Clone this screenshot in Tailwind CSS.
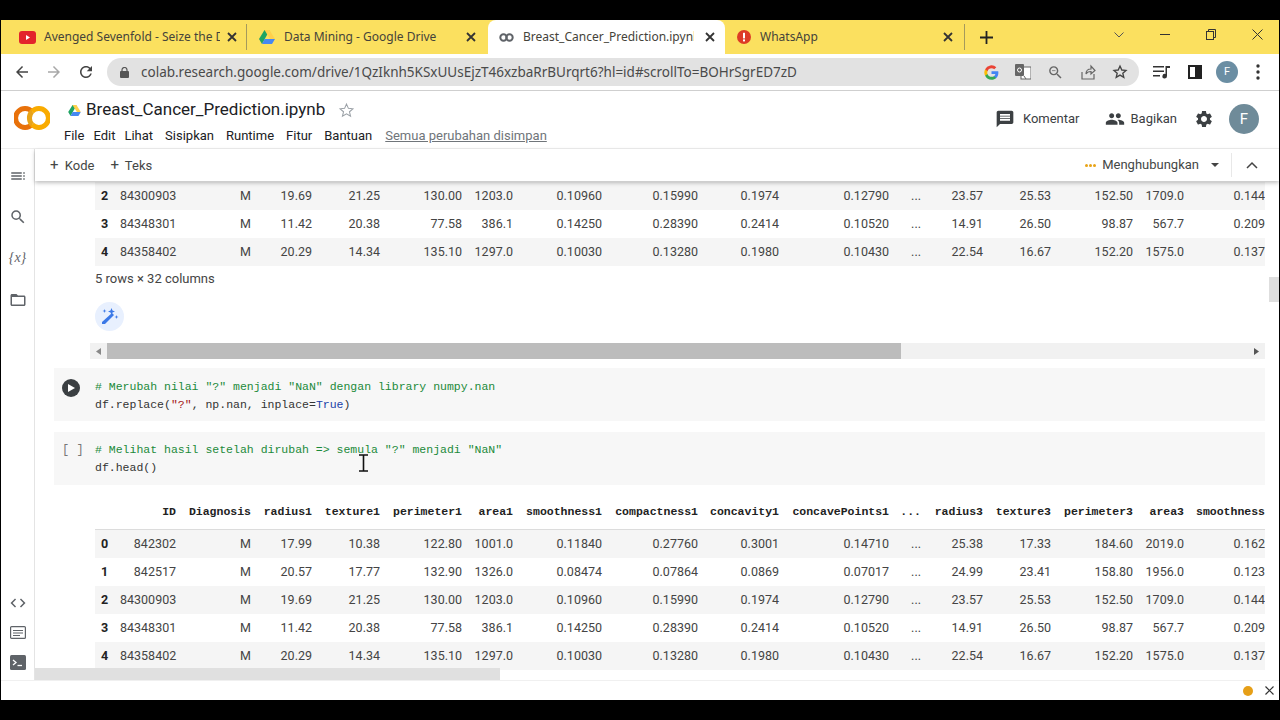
<!DOCTYPE html>
<html lang="id">

<head>
  <meta charset="UTF-8">
  <title>Breast_Cancer_Prediction.ipynb - Colaboratory</title>
  <script src="https://cdn.jsdelivr.net/npm/@tailwindcss/browser@4"></script>
</head>

<body class="bg-black h-[720px] overflow-hidden font-['Roboto',sans-serif] text-[#3c4043]">
  <div class="h-5"></div>
  <div class="relative mx-[1px] h-[680px] flex flex-col bg-white overflow-hidden">

    <!-- browser tabs -->
    <div class="h-[34px] shrink-0 bg-[#fbe05f] flex items-center font-['Noto_Sans',sans-serif] text-[12px] text-[#45433a]">
      <div class="w-[245px] flex items-center pl-[18px] pr-[9px]">
        <svg class="w-[17px] h-[13px] mr-[8px] shrink-0" viewBox="0 0 17 13"><rect width="17" height="13" rx="3" fill="#e3242b"/><path d="M7 4l4 2.5L7 9z" fill="#fff"/></svg>
        <span class="w-[176px] overflow-hidden whitespace-nowrap">Avenged Sevenfold - Seize the D</span>
        <svg class="w-[10px] h-[10px] ml-auto" viewBox="0 0 10 10"><path d="M1 1l8 8M9 1l-8 8" stroke="#333" stroke-width="1.8"/></svg>
      </div>
      <div class="w-[1px] h-[26px] bg-[#a59a5c]"></div>
      <div class="w-[241px] flex items-center pl-[12px] pr-[12px]">
        <svg class="w-[16px] h-[14px] mr-[9px] shrink-0" viewBox="0 0 16 14"><path d="M5.5 0h5L8 5 5.5 9.5 3 14 0 9z" fill="#1fa463"/><path d="M5.5 0h5L16 9h-5z" fill="#ffd04b"/><path d="M3 14l2.6-5H16l-3 5z" fill="#4688f1"/></svg>
        <span>Data Mining - Google Drive</span>
        <svg class="w-[10px] h-[10px] ml-auto" viewBox="0 0 10 10"><path d="M1 1l8 8M9 1l-8 8" stroke="#333" stroke-width="1.8"/></svg>
      </div>
      <div class="w-[237px] h-full bg-white rounded-t-[8px] flex items-center pl-[11px] pr-[10px]">
        <svg class="w-[15px] h-[9px] mr-[9px] shrink-0" viewBox="0 0 15 9" fill="none" stroke="#5f6368" stroke-width="2"><circle cx="4.5" cy="4.5" r="3.2"/><circle cx="10.5" cy="4.5" r="3.2"/></svg>
        <span class="w-[171px] overflow-hidden whitespace-nowrap">Breast_Cancer_Prediction.ipynb -</span>
        <svg class="w-[10px] h-[10px] ml-auto" viewBox="0 0 10 10"><path d="M1 1l8 8M9 1l-8 8" stroke="#333" stroke-width="1.8"/></svg>
      </div>
      <div class="w-[239px] flex items-center pl-[12px] pr-[11px]">
        <svg class="w-[14px] h-[14px] mr-[9px] shrink-0" viewBox="0 0 14 14"><circle cx="7" cy="7" r="7" fill="#dd3b26"/><rect x="6" y="2.8" width="2" height="5.6" fill="#fff"/><rect x="6" y="9.4" width="2" height="2" fill="#fff"/></svg>
        <span>WhatsApp</span>
        <svg class="w-[10px] h-[10px] ml-auto" viewBox="0 0 10 10"><path d="M1 1l8 8M9 1l-8 8" stroke="#333" stroke-width="1.8"/></svg>
      </div>
      <div class="w-[1px] h-[26px] bg-[#a59a5c]"></div>
      <svg class="w-[13px] h-[13px] ml-[15px]" viewBox="0 0 13 13"><path d="M6.5 0v13M0 6.5h13" stroke="#222" stroke-width="1.8"/></svg>
      <div class="ml-auto flex items-center -mt-[5px]">
        <svg class="w-[10px] h-[6px] mr-[36px]" viewBox="0 0 10 6" fill="none"><path d="M.5.5L5 5 9.500.5" stroke="#555"/></svg>
        <div class="w-[10px] h-[1px] bg-[#333] mr-[36px]"></div>
        <svg class="w-[10px] h-[11px] mr-[36px]" viewBox="0 0 10 11" fill="none" stroke="#333"><rect x=".5" y="2.500" width="7" height="8"/><path d="M2.500 2.500V.5h7v8H7.500"/></svg>
        <svg class="w-[11px] h-[11px] mr-[16px]" viewBox="0 0 11 11"><path d="M.5.5l10 10M10.500.5l-10 10" stroke="#333"/></svg>
      </div>
    </div>

    <!-- address bar -->
    <div class="h-[37px] shrink-0 bg-white border-b border-[#cfcfcf] flex items-center">
      <svg class="w-[18px] h-[18px] ml-[12px] fill-[#444]" viewBox="0 0 24 24"><path d="M20 11H7.830l5.590-5.590L12 4l-8 8 8 8 1.410-1.410L7.830 13H20v-2z"/></svg>
      <svg class="w-[18px] h-[18px] ml-[14px] fill-[#a8a8a8]" viewBox="0 0 24 24"><path d="M4 11h12.170l-5.590-5.590L12 4l8 8-8 8-1.410-1.410L16.170 13H4v-2z"/></svg>
      <svg class="w-[18px] h-[18px] ml-[14px] fill-[#444]" viewBox="0 0 24 24"><path d="M17.650 6.350C16.200 4.900 14.210 4 12 4c-4.420 0-7.990 3.580-7.990 8s3.570 8 7.990 8c3.730 0 6.840-2.550 7.730-6h-2.080c-.82 2.330-3.040 4-5.650 4-3.310 0-6-2.690-6-6s2.690-6 6-6c1.660 0 3.140.69 4.220 1.780L13 11h7V4l-2.350 2.350z"/></svg>
      <div class="ml-[12px] w-[1032px] h-[28px] rounded-full bg-[#e2e2e2] flex items-center pl-[13px] pr-[11px]">
        <svg class="w-[9px] h-[11px] mr-[12px]" viewBox="0 0 9 11"><rect y="4" width="9" height="7" rx="1" fill="#555"/><path d="M2 4.500V3a2.500 2.500 0 015 0v1.500" fill="none" stroke="#555" stroke-width="1.200"/></svg>
        <span class="font-['Noto_Sans',sans-serif] text-[13.5px] text-[#4a4a4a] whitespace-nowrap">colab.research.google.com/drive/1QzIknh5KSxUUsEjzT46xzbaRrBUrqrt6?hl=id#scrollTo=BOHrSgrED7zD</span>
        <div class="ml-auto flex items-center gap-[16px]">
          <svg class="w-[15px] h-[15px]" viewBox="0 0 24 24"><path d="M23 12.300c0-.8-.1-1.600-.2-2.300H12v4.300h6.200a5.300 5.300 0 01-2.300 3.500v2.900h3.700c2.200-2 3.400-5 3.400-8.400z" fill="#4285f4"/><path d="M12 23.500c3.100 0 5.700-1 7.600-2.800l-3.700-2.900c-1 .7-2.300 1.100-3.900 1.100-3 0-5.500-2-6.400-4.700H1.800v3A11.500 11.500 0 0012 23.500z" fill="#34a853"/><path d="M5.600 14.200a6.900 6.900 0 010-4.400v-3H1.800a11.500 11.500 0 000 10.400z" fill="#fbbc05"/><path d="M12 5.100c1.700 0 3.200.6 4.400 1.700l3.300-3.300A11.500 11.500 0 001.800 6.800l3.800 3C6.500 7.100 9 5.100 12 5.100z" fill="#ea4335"/></svg>
          <svg class="w-[16px] h-[16px]" viewBox="0 0 16 16"><rect x="6" y="3" width="10" height="12" fill="#fff" stroke="#666"/><rect width="9" height="12" rx="1" fill="#666"/><path d="M9 12l2 3" stroke="#666"/><circle cx="4.500" cy="6" r="2" fill="none" stroke="#fff"/></svg>
          <svg class="w-[17px] h-[17px] fill-[#666]" viewBox="0 0 24 24"><path d="M15.500 14h-.79l-.28-.27A6.470 6.470 0 0016 9.500 6.500 6.500 0 109.500 16c1.610 0 3.090-.59 4.230-1.570l.27.28v.79l5 4.990L20.490 19l-4.990-5zm-6 0C7.010 14 5 11.990 5 9.500S7.010 5 9.500 5 14 7.010 14 9.500 11.990 14 9.500 14z"/><path d="M7 9h5v1H7z"/></svg>
          <svg class="w-[16px] h-[16px]" viewBox="0 0 16 16" fill="none" stroke="#666" stroke-width="1.200"><path d="M2 8v7h12v-5M6 10c0-4 3-5 5-5V2l4 4.500L11 10V7.500C9 7.500 7 8 6 10z"/></svg>
          <svg class="w-[16px] h-[16px]" viewBox="0 0 24 24" fill="none" stroke="#444" stroke-width="2"><path d="M12 3l2.700 6 6.300.6-4.800 4.200 1.500 6.300L12 16.700 6.300 20l1.500-6.200L3 9.600 9.300 9z"/></svg>
        </div>
      </div>
      <svg class="w-[17px] h-[14px] ml-[14px]" viewBox="0 0 17 14" fill="#333"><path d="M0 1h11v1.500H0zM0 5.500h11V7H0zM0 10h7v1.500H0z"/><path d="M12.500 1H17v2h-3v8a2.300 2.300 0 11-1.500-2z"/></svg>
      <svg class="w-[14px] h-[14px] ml-[18px]" viewBox="0 0 14 14"><path fill-rule="evenodd" d="M0 0h14v14H0zM2 2v10h5V2z" fill="#222"/></svg>
      <div class="w-[22px] h-[22px] ml-[14px] rounded-full bg-[#6b8ea3] text-white text-[11px] flex items-center justify-center">F</div>
      <svg class="w-[4px] h-[16px] ml-[18px]" viewBox="0 0 4 16" fill="#333"><circle cx="2" cy="2" r="1.700"/><circle cx="2" cy="8" r="1.700"/><circle cx="2" cy="14" r="1.700"/></svg>
    </div>

    <!-- colab header -->
    <div class="h-[58px] shrink-0 flex border-b border-[#eeeeee]">
      <svg class="w-[36px] h-[24px] ml-[13px] mt-[15px]" viewBox="0 0 36 24" fill="none" stroke-width="5"><path d="M18 5.500A9.500 9.500 0 1018 18.500" stroke="#e8710a"/><path d="M18 5.500a9.500 9.500 0 110 13" stroke="#f9ab00"/><path d="M18 18.500a9.500 9.500 0 010-13" stroke="#e8a317"/></svg>
      <div class="ml-[14px] pt-[6px]">
        <div class="h-[26px] flex items-center">
          <svg class="w-[13px] h-[11px] ml-[4px] mr-[5px]" viewBox="0 0 16 14"><path d="M5.500 0h5L8 5 5.500 9.500 3 14 0 9z" fill="#1fa463"/><path d="M5.500 0h5L16 9h-5z" fill="#ffd04b"/><path d="M3 14l2.600-5H16l-3 5z" fill="#4688f1"/></svg>
          <span class="text-[17px] text-[#202124]">Breast_Cancer_Prediction.ipynb</span>
          <svg class="w-[17px] h-[17px] ml-[13px]" viewBox="0 0 24 24" fill="none" stroke="#9aa0a6" stroke-width="1.500"><path d="M12 3l2.700 6 6.300.6-4.800 4.200 1.500 6.300L12 16.700 6.300 20l1.500-6.200L3 9.600 9.300 9z"/></svg>
        </div>
        <div class="flex mt-[3px] text-[13px] text-[#202124] leading-[20px]">
          <span class="ml-0">File</span><span class="ml-[9px]">Edit</span><span class="ml-[9px]">Lihat</span><span class="ml-[12px]">Sisipkan</span><span class="ml-[12px]">Runtime</span><span class="ml-[12px]">Fitur</span><span class="ml-[12px]">Bantuan</span>
          <span class="ml-[13px] underline text-[#70757a]">Semua perubahan disimpan</span>
        </div>
      </div>
      <div class="ml-auto flex items-center text-[13px] text-[#3c4043] -mt-[1px]">
        <svg class="w-[20px] h-[20px] fill-[#3c4043]" viewBox="0 0 24 24"><path d="M20 2H4c-1.100 0-2 .9-2 2v18l4-4h14c1.100 0 2-.9 2-2V4c0-1.100-.9-2-2-2zm-2 12H6v-2h12v2zm0-3H6V9h12v2zm0-3H6V6h12v2z"/></svg>
        <span class="ml-[8px]">Komentar</span>
        <svg class="ml-[25px] w-[20px] h-[20px] fill-[#3c4043]" viewBox="0 0 24 24"><path d="M16 11c1.660 0 2.990-1.340 2.990-3S17.660 5 16 5c-1.660 0-3 1.340-3 3s1.340 3 3 3zm-8 0c1.660 0 2.990-1.340 2.990-3S9.660 5 8 5C6.340 5 5 6.340 5 8s1.340 3 3 3zm0 2c-2.330 0-7 1.170-7 3.500V19h14v-2.500c0-2.330-4.670-3.500-7-3.500zm8 0c-.29 0-.62.02-.97.05 1.160.84 1.970 1.970 1.970 3.450V19h6v-2.500c0-2.330-4.670-3.500-7-3.500z"/></svg>
        <span class="ml-[6px]">Bagikan</span>
        <svg class="ml-[17px] w-[20px] h-[20px] fill-[#3c4043]" viewBox="0 0 24 24"><path d="M19.140 12.940c.04-.3.06-.61.06-.94 0-.32-.02-.64-.07-.94l2.030-1.580c.18-.14.23-.41.12-.61l-1.920-3.320c-.12-.22-.37-.29-.59-.22l-2.390.96c-.5-.38-1.030-.7-1.620-.94l-.36-2.540c-.04-.24-.24-.41-.48-.41h-3.840c-.24 0-.43.17-.47.41l-.36 2.540c-.59.24-1.130.57-1.620.94l-2.390-.96c-.22-.08-.47 0-.59.22L2.740 8.870c-.12.21-.08.47.12.61l2.030 1.580c-.05.3-.09.63-.09.94s.02.64.07.94l-2.030 1.580c-.18.14-.23.41-.12.61l1.920 3.320c.12.22.37.29.59.22l2.390-.96c.5.38 1.030.7 1.620.94l.36 2.540c.05.24.24.41.48.41h3.840c.24 0 .44-.17.47-.41l.36-2.540c.59-.24 1.130-.56 1.620-.94l2.390.96c.22.08.47 0 .59-.22l1.920-3.320c.12-.22.07-.47-.12-.61l-2.010-1.580zM12 15.600c-1.980 0-3.600-1.620-3.600-3.600s1.620-3.600 3.600-3.600 3.600 1.620 3.600 3.600-1.620 3.600-3.600 3.600z"/></svg>
        <div class="ml-[15px] mr-[20px] w-[30px] h-[30px] rounded-full bg-[#6f8b99] text-white text-[15px] flex items-center justify-center">F</div>
      </div>
    </div>

    <div class="flex-1 min-h-0 flex">
      <!-- left rail -->
      <div class="w-[34px] shrink-0 border-r border-[#e4e4e4] flex flex-col items-center pb-[10px] text-[#5f6368]">
        <svg class="w-[18px] h-[18px] mt-[18px] fill-[#5f6368]" viewBox="0 0 24 24"><path d="M3 9h14V7H3v2zm0 4h14v-2H3v2zm0 4h14v-2H3v2zm16 0h2v-2h-2v2zm0-10v2h2V7h-2zm0 6h2v-2h-2v2z"/></svg>
        <svg class="w-[18px] h-[18px] mt-[23px] fill-[#5f6368]" viewBox="0 0 24 24"><path d="M15.500 14h-.79l-.28-.27A6.470 6.470 0 0016 9.500 6.500 6.500 0 109.500 16c1.610 0 3.090-.59 4.230-1.570l.27.28v.79l5 4.990L20.490 19l-4.990-5zm-6 0C7.010 14 5 11.990 5 9.500S7.010 5 9.500 5 14 7.010 14 9.500 11.990 14 9.500 14z"/></svg>
        <span class="mt-[22px] font-['Liberation_Serif',serif] italic text-[14px] leading-[20px]">{x}</span>
        <svg class="w-[18px] h-[18px] mt-[23px] fill-[#5f6368]" viewBox="0 0 24 24"><path d="M20 6h-8l-2-2H4c-1.100 0-1.990.9-1.990 2L2 18c0 1.100.9 2 2 2h16c1.100 0 2-.9 2-2V8c0-1.100-.9-2-2-2zm0 12H4V8h16v10z"/></svg>
        <svg class="w-[18px] h-[18px] mt-auto fill-[#5f6368]" viewBox="0 0 24 24"><path d="M9.400 16.600L4.800 12l4.600-4.600L8 6l-6 6 6 6 1.400-1.400zm5.200 0l4.600-4.600-4.600-4.600L16 6l6 6-6 6-1.400-1.400z"/></svg>
        <svg class="w-[16px] h-[13px] mt-[14px]" viewBox="0 0 16 13" fill="none" stroke="#5f6368" stroke-width="1.200"><rect x=".6" y=".6" width="14.800" height="11.800" rx="1"/><path d="M3 4.500h10M3 7h10M3 9.500h7"/></svg>
        <svg class="w-[16px] h-[15px] mt-[16px]" viewBox="0 0 16 15"><rect width="16" height="15" rx="1.500" fill="#5f6368"/><path d="M3 5l3 2.500L3 10" fill="none" stroke="#fff" stroke-width="1.300"/><path d="M7.500 10.500H12" stroke="#fff" stroke-width="1.300"/></svg>
      </div>

      <div class="flex-1 min-w-0 flex flex-col relative">
        <!-- notebook toolbar -->
        <div class="h-[32px] shrink-0 bg-white shadow-[0_2px_4px_rgba(0,0,0,0.25)] z-10 flex items-center text-[13px] text-[#444746] relative">
          <span class="ml-[15px]"><span class="text-[15px] mr-[3px]">+</span> Kode</span>
          <span class="ml-[16px]"><span class="text-[15px] mr-[3px]">+</span> Teks</span>
          <span class="ml-auto w-[3px] h-[3px] rounded-full bg-[#e8a317]"></span>
          <span class="ml-[1px] w-[3px] h-[3px] rounded-full bg-[#e8a317]"></span>
          <span class="ml-[1px] w-[3px] h-[3px] rounded-full bg-[#e8a317] mr-[6px]"></span>
          <span class="text-[13px]">Menghubungkan</span>
          <svg class="w-[8px] h-[4px] ml-[12px]" viewBox="0 0 8 4" fill="#444"><path d="M0 0h8L4 4z"/></svg>
          <div class="w-[1px] h-[24px] bg-[#e8e8e8] ml-[12px]"></div>
          <svg class="w-[12px] h-[8px] ml-[14px] mr-[21px]" viewBox="0 0 12 8" fill="none" stroke="#444" stroke-width="1.500"><path d="M1 7l5-5 5 5"/></svg>
        </div>

        <!-- notebook -->
        <div id="notebook" class="flex-1 min-h-0 overflow-hidden relative pl-[60px] pr-[14px]">
          <div id="tableTop"></div>
          <div class="text-[13px] text-[#444] leading-[20px] mt-[3px]">5 rows × 32 columns</div>
          <div class="w-[29px] h-[29px] mt-[13px] ml-0 rounded-full bg-[#e8f0fe] flex items-center justify-center">
            <svg class="w-[19px] h-[19px]" viewBox="0 0 19 19" fill="#3b78e7"><path d="M12 6l2 2-9 9-3 0 0-2z"/><path d="M11.500 1l1 2.500L15 4.500l-2.500 1-1 2.500-1-2.500L8 4.500l2.500-1zM16.500 8l.5 1.500 1.500.5-1.500.5-.5 1.500-.5-1.500L14.500 10l1.500-.5zM4.500 2l.5 1.500 1.500.5L5 4.500 4.500 6 4 4.500 2.500 4 4 3.500z"/></svg>
          </div>
          <!-- output h-scrollbar -->
          <div class="-ml-[5px] mt-[12px] h-[16px] bg-[#f1f1f1] flex items-center relative">
            <svg class="w-[5px] h-[7px] ml-[6px]" viewBox="0 0 5 7" fill="#888"><path d="M5 0v7L0 3.500z"/></svg>
            <div class="absolute left-[17px] top-0 w-[794px] h-full bg-[#bcbcbc]"></div>
            <svg class="w-[5px] h-[7px] ml-auto mr-[6px]" viewBox="0 0 5 7" fill="#555"><path d="M0 0v7l5-3.500z"/></svg>
          </div>

          <!-- code cells -->
          <div class="-ml-[41px] mt-[9px] h-[53px] bg-[#f7f7f7] relative pl-[41px] pt-[10px] font-['Liberation_Mono',monospace] text-[11.5px] leading-[17.5px] text-[#333]">
            <div class="absolute left-[8px] top-[11px] w-[18px] h-[18px] rounded-full bg-[#3b3f42] flex items-center justify-center">
              <svg class="w-[7px] h-[8px]" viewBox="0 0 7 8" fill="#fff"><path d="M0 0l7 4-7 4z"/></svg>
            </div>
            <div class="whitespace-pre text-[#1b8a3a]"># Merubah nilai "?" menjadi "NaN" dengan library numpy.nan</div>
            <div class="whitespace-pre">df.replace(<span class="text-[#a31515]">"?"</span>, np.nan, inplace=<span class="text-[#1a3fa8]">True</span>)</div>
          </div>
          <div class="-ml-[41px] mt-[11px] h-[53px] bg-[#f7f7f7] relative pl-[41px] pt-[9px] font-['Liberation_Mono',monospace] text-[11.5px] leading-[17.5px] text-[#333]">
            <div class="absolute left-[8px] top-[10px] text-[#777] text-[12px] whitespace-pre">[ ]</div>
            <div class="whitespace-pre text-[#1b8a3a]"># Melihat hasil setelah dirubah =&gt; semula "?" menjadi "NaN"</div>
            <div class="whitespace-pre">df.head()</div>
          </div>

          <div id="tableBottom" class="mt-[9px]"></div>

          <!-- I-beam cursor -->
          <svg class="absolute left-[324px] top-[273px] w-[9px] h-[18px]" viewBox="0 0 9 18" fill="none" stroke="#111" stroke-width="1.600"><path d="M0 1h9M0 17h9M4.500 1v16"/></svg>

          <!-- page scrollbars -->
          <div class="absolute right-0 top-[96px] w-[10px] h-[25px] bg-[#dedede]"></div>
          <div class="absolute left-0 bottom-0 w-[465px] h-[12px] bg-[#e0e0e0]"></div>
        </div>
      </div>
    </div>

    <!-- status bar -->
    <div class="h-[20px] shrink-0 bg-white flex items-center justify-end border-t border-[#f0f0f0]">
      <div class="w-[10px] h-[10px] rounded-full bg-[#e69f17]"></div>
      <svg class="w-[9px] h-[9px] ml-[12px] mr-[5px]" viewBox="0 0 9 9"><path d="M.5.5l8 8M8.500.5l-8 8" stroke="#333" stroke-width="1.200"/></svg>
    </div>
  </div>

  <script>
    // same dataframe is printed twice, the upper output is scrolled past rows 0 and 1
    const headers = ["", "ID", "Diagnosis", "radius1", "texture1", "perimeter1", "area1", "smoothness1", "compactness1", "concavity1", "concavePoints1", "...", "radius3", "texture3", "perimeter3", "area3", "smoothness"];
    const rows = [
      ["0", "842302", "M", "17.99", "10.38", "122.80", "1001.0", "0.11840", "0.27760", "0.3001", "0.14710", "...", "25.38", "17.33", "184.60", "2019.0", "0.162"],
      ["1", "842517", "M", "20.57", "17.77", "132.90", "1326.0", "0.08474", "0.07864", "0.0869", "0.07017", "...", "24.99", "23.41", "158.80", "1956.0", "0.123"],
      ["2", "84300903", "M", "19.69", "21.25", "130.00", "1203.0", "0.10960", "0.15990", "0.1974", "0.12790", "...", "23.57", "25.53", "152.50", "1709.0", "0.144"],
      ["3", "84348301", "M", "11.42", "20.38", "77.58", "386.1", "0.14250", "0.28390", "0.2414", "0.10520", "...", "14.91", "26.50", "98.87", "567.7", "0.209"],
      ["4", "84358402", "M", "20.29", "14.34", "135.10", "1297.0", "0.10030", "0.13280", "0.1980", "0.10430", "...", "22.54", "16.67", "152.20", "1575.0", "0.137"]
    ];
    const gridCols = "grid grid-cols-[25px_56px_75px_61px_68px_82px_51px_89px_96px_81px_110px_32px_62px_68px_82px_51px_81px]";

    function rowHtml(row, i) {
      const stripe = i % 2 === 0 ? "bg-[#f5f5f5]" : "bg-white";
      const cells = row.map((val, c) => {
        if (c === 0) return `<div class="pl-[6px] font-bold text-[#222]">${val}</div>`;
        if (c === 16) return `<div class="text-right pr-0 overflow-hidden">${val}</div>`;
        return `<div class="text-right whitespace-nowrap">${val}</div>`;
      }).join("");
      return `<div class="${gridCols} ${stripe} h-[28px] items-center text-[12.5px] text-[#444]">${cells}</div>`;
    }

    function headHtml() {
      const cells = headers.map(h => `<div class="text-right whitespace-nowrap overflow-visible">${h}</div>`).join("");
      return `<div class="${gridCols} h-[36px] items-center border-b border-[#dcdcdc] font-['Liberation_Mono',monospace] font-bold text-[11.5px] text-[#222] overflow-hidden">${cells}</div>`;
    }

    document.getElementById("tableTop").innerHTML = `<div class="pt-[1px]">${rows.slice(2).map((r, i) => rowHtml(r, i)).join("")}</div>`;
    document.getElementById("tableBottom").innerHTML = headHtml() + rows.map(rowHtml).join("");
  </script>
</body>

</html>
